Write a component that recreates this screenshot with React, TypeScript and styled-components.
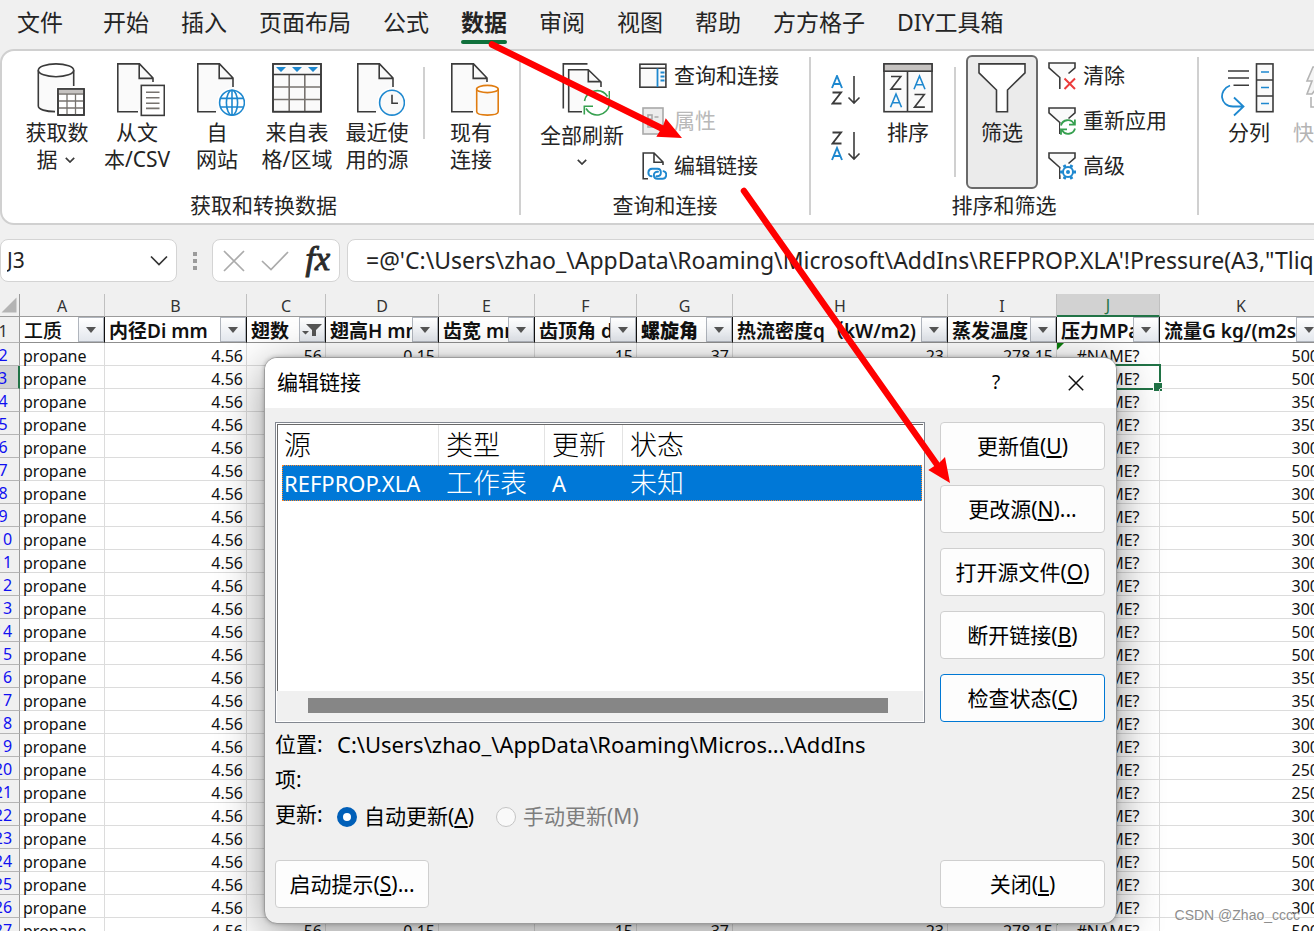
import React from "react";
import styled, { createGlobalStyle, css } from "styled-components";

const UI_FONT = `"Noto Sans", "Noto Sans CJK SC", sans-serif`;
const DARK = "#3b3b3b";
const BLUE = "#1e88cf";
const GREEN = "#217346";

const GlobalStyle = createGlobalStyle`
  * { box-sizing: border-box; }
  body { margin: 0; background: #f0f0f0; }
  button, input { font: inherit; color: inherit; margin: 0; }
  button { padding: 0; border: 0; background: none; cursor: pointer; }
`;

const Page = styled.div`
  position: relative;
  display: flex;
  flex-direction: column;
  height: 100vh;
  overflow: hidden;
  background: #f0f0f0;
  color: #242424;
  font-family: ${UI_FONT};
  font-size: 21px;
  line-height: 27px;
`;

/* ---------- ribbon tabs ---------- */

const TabBar = styled.nav`
  display: flex;
  flex-shrink: 0;
  gap: 32px;
  height: 49px;
  padding: 0 17px;
  font-size: 23px;
`;

const Tab = styled.button<{ $active?: boolean; $first?: boolean }>`
  display: flex;
  flex-direction: column;
  flex-shrink: 0;
  justify-content: space-between;
  height: 44px;
  padding-top: 6px;
  line-height: 32px;
  white-space: nowrap;
  margin-right: ${(p) => (p.$first ? "8px" : "0")};
  font-weight: ${(p) => (p.$active ? 700 : 400)};
  &::after {
    content: "";
    width: 100%;
    height: 4px;
    border-radius: 2px;
    background: ${(p) => (p.$active ? "#0f703b" : "transparent")};
  }
`;

/* ---------- ribbon ---------- */

const Ribbon = styled.section`
  display: flex;
  flex-shrink: 0;
  height: 176px;
  margin-right: -20px;
  padding: 6px 0 8px;
  border: 2px solid #d0d0d0;
  border-radius: 14px;
  background: #fff;
  overflow: hidden;
`;

const Group = styled.div<{ $width: number }>`
  display: flex;
  flex-direction: column;
  flex-shrink: 0;
  justify-content: space-between;
  width: ${(p) => p.$width}px;
  border-right: 2px solid #d0d0d0;
`;

const GroupItems = styled.div<{ $indent?: number }>`
  display: flex;
  align-items: flex-start;
  padding-left: ${(p) => p.$indent ?? 0}px;
`;

const GroupLabel = styled.div<{ $indent?: number }>`
  height: 23px;
  padding-left: ${(p) => p.$indent ?? 0}px;
  text-align: center;
`;

const BigButton = styled.button<{ $width?: number; $muted?: boolean }>`
  display: flex;
  flex-direction: column;
  flex-shrink: 0;
  align-items: center;
  width: ${(p) => p.$width ?? 80}px;
  padding-top: 6px;
  gap: 2px;
  white-space: nowrap;
  color: ${(p) => (p.$muted ? "#b4b4b4" : "inherit")};
`;

const FilterToggle = styled(BigButton)`
  height: 134px;
  margin: -2px 10px 0;
  border: 2px solid #6a6a6a;
  border-radius: 6px;
  background: #ebebeb;
`;

const StackedLabel = styled.span`
  display: flex;
  flex-direction: column;
  align-items: center;
  gap: 10px;
  padding-top: 3px;
`;

const Separator = styled.div<{ $height: number }>`
  flex-shrink: 0;
  width: 2px;
  height: ${(p) => p.$height}px;
  margin: 10px 0 0 6px;
  background: #d0d0d0;
`;

const SmallColumn = styled.div<{ $gap?: number }>`
  display: flex;
  flex-direction: column;
  gap: 17px;
  margin-left: ${(p) => p.$gap ?? 0}px;
  padding-top: 5px;
`;

const SmallButton = styled.button`
  display: flex;
  align-items: flex-start;
  gap: 7px;
  height: 28px;
  line-height: 26px;
  white-space: nowrap;
  &:disabled { color: #b9b9b9; }
`;

const SortColumn = styled.div`
  display: flex;
  flex-direction: column;
  gap: 26px;
  width: 37px;
  padding-top: 18px;
`;

const Drawing = styled.svg`
  display: block;
  flex-shrink: 0;
`;

const ChevronLine = styled.span`
  display: flex;
  align-items: center;
  gap: 7px;
  height: 27px;
  padding-left: 11px;
`;

const Big: React.FC<{ children: React.ReactNode; color?: string }> = ({ children, color = DARK }) => (
  <Drawing width="56" height="54" viewBox="0 0 56 54" fill="none" stroke={color} strokeWidth="1.6" aria-hidden>
    {children}
  </Drawing>
);

const Small: React.FC<{ children: React.ReactNode; color?: string }> = ({ children, color = DARK }) => (
  <Drawing width="28" height="28" viewBox="0 0 28 28" fill="none" stroke={color} strokeWidth="1.6" aria-hidden>
    {children}
  </Drawing>
);

const Chevron = () => (
  <Drawing width="10" height="6" viewBox="0 0 10 6" fill="none" stroke={DARK} strokeWidth="1.7" aria-hidden>
    <path d="M0.8 0.8 L5 5 L9.2 0.8" />
  </Drawing>
);

const Sheet = ({ tail = 24, foot = 27 }: { tail?: number; foot?: number }) => (
  <>
    <path d={`M${foot} 48.7 H8.8 V0.9 H30.5 L44 15 V${tail} L${foot} 48.7Z`} fill="#fafafa" stroke="none" />
    <path d={`M${foot} 48.7 H8.8 V0.9 H30.5 L44 15 V${tail} M30.2 0.9 V15.4 H44`} />
  </>
);

const DatabaseIcon = () => (
  <Big>
    <path d="M9.3 7.3 V43 C9.3 47 18 49 27 48.6 V24 H44.7 V7.3" fill="#fafafa" stroke="none" />
    <path d="M9.3 7.3 V43 C9.3 46.5 17 48.6 26 48.6 M44.7 7.3 V23" />
    <ellipse cx="27" cy="7.3" rx="17.7" ry="6.4" fill="#fff" />
    <rect x="29" y="26" width="26" height="26" fill="#fff" />
    <path d="M29.5 28.3 H54.5" stroke="#c6c3c1" strokeWidth="4" />
    <path d="M29 31 H55 M29 38 H55 M29 45 H55 M38 31 V52 M46.5 31 V52" stroke="#77736f" strokeWidth="1.3" />
    <rect x="29" y="26" width="26" height="26" />
  </Big>
);

const TextFileIcon = () => (
  <Big>
    <Sheet tail={19} foot={29} />
    <rect x="32.3" y="22.4" width="23" height="30" fill="#fff" />
    <path d="M37 29.3 H50.5 M37 34.8 H50.5 M37 40.2 H50.5 M37 45.4 H50.5" stroke="#77736f" />
  </Big>
);

const WebIcon = () => (
  <Big>
    <Sheet />
    <g stroke={BLUE}>
      <circle cx="43" cy="39.7" r="14.8" fill="#fff" stroke="none" />
      <circle cx="43" cy="39.7" r="12.4" />
      <ellipse cx="43" cy="39.7" rx="5.6" ry="12.4" />
      <path d="M43 27.3 V52 M31.5 35.4 H54.5 M31.5 44 H54.5" />
    </g>
  </Big>
);

const TableIcon = () => (
  <Big>
    <rect x="4" y="0.9" width="48" height="47.8" fill="#fafafa" />
    <path d="M5 24 H51 M5 36.5 H51 M20.2 11.5 V48 M35.8 11.5 V48" stroke="#77736f" />
    <path d="M4 11.5 H52" />
    <path d="M7 4 H17 L12 9Z M23 4 H33 L28 9Z M39 4 H49 L44 9Z" fill={BLUE} stroke="none" />
    <rect x="4" y="0.9" width="48" height="47.8" />
  </Big>
);

const RecentIcon = () => (
  <Big>
    <Sheet />
    <circle cx="43" cy="39.7" r="14.8" fill="#fff" stroke="none" />
    <circle cx="43" cy="39.7" r="12.4" stroke={BLUE} fill="#fafafa" />
    <path d="M43 31.7 V40.2 H49" />
  </Big>
);

const ConnectionIcon = () => (
  <Big>
    <Sheet tail={19} foot={30} />
    <g stroke="#e07c10">
      <path d="M33.7 26 V48.8 C33.7 53.2 55.2 53.2 55.2 48.8 V26" fill="#fafafa" />
      <ellipse cx="44.4" cy="26" rx="10.8" ry="3.6" fill="#fff" />
    </g>
  </Big>
);

const RefreshAllIcon = () => (
  <Big>
    <path d="M33.5 0.9 H9.3 V45.5" />
    <path d="M28 48.7 H14.7 V6.7 H34.3 L47 19 V24 L30 34Z" fill="#fafafa" stroke="none" />
    <path d="M28 48.7 H14.7 V6.7 H34.3 L47 19 V24 M34.3 6.7 V18.6 H47" />
    <g stroke="#36a04f">
      <path d="M30.5 38 A12.6 12.6 0 0 1 53.5 33.5 M55.5 41 A12.6 12.6 0 0 1 32 45.5" />
      <path d="M55.4 28 V35.8 H46.5 M30.3 51.5 V43.2 H39" />
    </g>
  </Big>
);

const QueriesIcon = () => (
  <Small>
    <rect x="0.9" y="2.2" width="26" height="23" fill="#fafafa" />
    <path d="M1 6.3 H27" />
    <path d="M18.5 6.5 V25 M21.5 10.5 H25.5 M21.5 14.5 H25.5 M21.5 18.5 H25.5" stroke={BLUE} strokeWidth="1.8" />
  </Small>
);

const PropertiesIcon = () => (
  <Small color="#a9a9a9">
    <rect x="4" y="1" width="20" height="26" fill="#ececec" />
    <rect x="9" y="8" width="4" height="4" />
    <rect x="9" y="16" width="4" height="4" />
    <path d="M15.5 10 H19.5 M16 18 H20" />
  </Small>
);

const EditLinksIcon = () => (
  <Small>
    <path d="M9 26.8 H4.2 V1 H15 L24 10 V13 M15 1 V10.2 H24" />
    <g stroke={BLUE} strokeWidth="1.9" strokeLinecap="round">
      <path d="M12.5 24.3 C8 23.5 8.5 17 13 16.8 H18.5 C23 17 23 24 18.5 24.2 H17.5" />
      <path d="M24.5 19.2 C29 20.5 27.5 26.8 23.5 26.8 H18.5 C14 26.8 13.5 20 18 19.8 H19" />
    </g>
  </Small>
);

const LetterA = ({ x, y, s = 1 }: { x: number; y: number; s?: number }) => (
  <path
    d={`M${x} ${y + 12 * s} L${x + 5 * s} ${y} L${x + 10 * s} ${y + 12 * s} M${x + 2 * s} ${y + 8 * s} H${x + 8 * s}`}
    stroke={BLUE}
  />
);

const LetterZ = ({ x, y, s = 1 }: { x: number; y: number; s?: number }) => (
  <path d={`M${x} ${y} H${x + 8.5 * s} L${x} ${y + 11 * s} H${x + 9 * s}`} />
);

const SortIcon = ({ descending = false }: { descending?: boolean }) => (
  <Drawing width="30" height="30" viewBox="0 0 30 30" fill="none" stroke={DARK} strokeWidth="1.9" aria-hidden>
    {descending ? <LetterZ x={1.5} y={1.5} /> : <LetterA x={1} y={1} />}
    {descending ? <LetterA x={1} y={17} /> : <LetterZ x={1.5} y={17.5} />}
    <path d="M23 1 V28 M17.5 22.5 L23 28 L28.5 22.5" strokeWidth="1.6" />
  </Drawing>
);

const SortDialogIcon = () => (
  <Big>
    <rect x="4" y="0.9" width="48" height="47.8" fill="#fafafa" />
    <rect x="4" y="0.9" width="48" height="7.3" fill="#c6c3c1" />
    <path d="M27.5 8 V48.5" />
    <LetterZ x={11} y={13.5} s={1.15} />
    <LetterA x={10.5} y={31} s={1.1} />
    <LetterA x={34} y={13} s={1.1} />
    <LetterZ x={34.5} y={31.5} s={1.15} />
  </Big>
);

const FilterIcon = () => (
  <Big>
    <path d="M5 0.9 H51 V9.8 L33.5 27 V48.7 H22.5 V27 L5 9.8Z" fill="#fff" />
  </Big>
);

const FunnelOutline = () => <path d="M11.8 27 V15.5 L1 5.8 V1 H27 V5.8 L20.5 11.5" fill="#fafafa" />;

const ClearIcon = () => (
  <Small>
    <FunnelOutline />
    <path d="M16.5 16.5 L27 27 M27 16.5 L16.5 27" stroke="#ec3b3b" strokeWidth="2" />
  </Small>
);

const ReapplyIcon = () => (
  <Small>
    <FunnelOutline />
    <circle cx="20" cy="20" r="8" fill="#fff" stroke="none" />
    <path
      d="M13 18.5 A7 7 0 0 1 26 17 M27 21.5 A7 7 0 0 1 14 23 M26.9 12.5 V17.7 H21 M13 27.8 V22.4 H19"
      stroke="#36a04f"
      strokeWidth="1.8"
    />
  </Small>
);

const AdvancedIcon = () => (
  <Small>
    <FunnelOutline />
    <circle cx="20" cy="20" r="8" fill="#fff" stroke="none" />
    <circle cx="20" cy="20" r="5" stroke={BLUE} strokeWidth="2" />
    <circle cx="20" cy="20" r="2" fill={BLUE} stroke="none" />
    <g stroke={BLUE} strokeWidth="3">
      <path d="M17.3 15.3 L16 13 M22.7 15.3 L24 13 M25.3 20 H28 M22.7 24.7 L24 27 M17.3 24.7 L16 27 M14.7 20 H12" />
    </g>
  </Small>
);

const SplitColumnsIcon = () => (
  <Big>
    <path d="M7 8 H28 M7 15 H28 M12.5 22.3 H28" />
    <rect x="35.5" y="0.9" width="16.5" height="47.8" fill="#fafafa" />
    <path d="M35.5 17 H52 M35.5 33 H52" />
    <path d="M40 9 H48 M40 24.5 H48 M40 40.5 H48" stroke={BLUE} />
    <path d="M9 22.5 C-3 27 -1 43.5 12 43.5 H22.5 M13 34.5 L22.5 43.5 L13 52.5" stroke={BLUE} strokeWidth="1.8" />
  </Big>
);

const FlashFillIcon = () => (
  <Big color="#b4b4b4">
    <path d="M34 4 H27 L21 18 H26 L21 31 H26 L36 18 H31Z" fill="#f5f5f5" />
    <path d="M25 34 V44 H45 V4 H38" />
  </Big>
);

/* ---------- formula bar ---------- */

const FormulaBar = styled.section`
  display: flex;
  flex-shrink: 0;
  height: 69px;
  padding: 14px 0 12px;
`;

const barBox = css`
  display: flex;
  align-items: center;
  height: 43px;
  border: 1px solid #d4d4d4;
  border-radius: 8px;
  background: #fff;
`;

const NameBox = styled.div`
  ${barBox}
  flex-shrink: 0;
  width: 177px;
  padding: 0 8px 0 6px;
  input {
    flex: 1;
    min-width: 0;
    padding: 0;
    border: 0;
    outline: 0;
    background: none;
  }
`;

const Grip = styled.div`
  display: flex;
  flex-direction: column;
  flex-shrink: 0;
  justify-content: center;
  align-items: center;
  gap: 3px;
  width: 35px;
  height: 43px;
  i {
    width: 4px;
    height: 4px;
    background: #9b9b9b;
  }
`;

const FormulaActions = styled.div`
  ${barBox}
  flex-shrink: 0;
  justify-content: space-between;
  width: 128px;
  padding: 0 8px 0 10px;
`;

const FxButton = styled.button`
  padding: 0 1px 4px 0;
  font: italic 400 34px/36px "Liberation Serif", serif;
  color: #2b2b2b;
  -webkit-text-stroke: 1px #2b2b2b;
`;

const FormulaInput = styled.input`
  ${barBox}
  flex: 1;
  min-width: 0;
  margin: 0 -20px 0 7px;
  padding: 0 0 2px 18px;
  outline: 0;
  font-size: 23px;
  white-space: nowrap;
`;

/* ---------- worksheet ---------- */

const SheetArea = styled.main`
  flex: 1;
  min-height: 0;
  overflow: hidden;
`;

const Grid = styled.table`
  width: 1336px;
  margin-left: -13px;
  table-layout: fixed;
  border-spacing: 0;
  background: #fff;
  color: #111;
  font-size: 16px;
  line-height: 20px;
  th, td {
    padding: 0;
    font-weight: 400;
    white-space: nowrap;
  }
`;

const ColumnHead = styled.th<{ $active?: boolean }>`
  height: 23px;
  border-right: 1px solid #c0c0c0;
  border-bottom: ${(p) => (p.$active ? `2px solid ${GREEN}` : "1px solid #9b9b9b")};
  background: ${(p) => (p.$active ? "#d2d2d2" : "#f0f0f0")};
  color: ${(p) => (p.$active ? GREEN : "#333")};
  vertical-align: bottom;
`;

const Corner = styled.th`
  border-right: 1px solid #9b9b9b;
  border-bottom: 1px solid #9b9b9b;
  background: #f0f0f0;
  svg { margin: 0 2px 0 auto; }
`;

const RowHead = styled.th<{ $active?: boolean; $plain?: boolean }>`
  border-right: ${(p) => (p.$active ? `2px solid ${GREEN}` : "1px solid #9b9b9b")};
  border-bottom: 1px solid #b5b5b5;
  background: ${(p) => (p.$active ? "#d2d2d2" : "#f0f0f0")};
  color: ${(p) => (p.$plain ? "#333" : "#1010f0")};
  && { padding-top: 2px; }
  line-height: 20px;
`;

const FieldHead = styled.td<{ $weight: number }>`
  height: 26px;
  border-right: 1px solid #111;
  border-bottom: 1px solid #8f8f8f;
  > div {
    display: flex;
    justify-content: space-between;
    height: 25px;
    padding-left: 4px;
  }
  span {
    min-width: 0;
    overflow: hidden;
    font-size: 19px;
    font-weight: ${(p) => p.$weight};
    line-height: 29px;
  }
`;

const FilterButton = styled.button`
  display: flex;
  flex-shrink: 0;
  align-items: center;
  justify-content: center;
  width: 26px;
  height: 25px;
  border: 1px solid #b0b5bd;
  background: linear-gradient(#fff, #e3e7ed);
`;

const Cell = styled.td<{ $align?: string }>`
  position: relative;
  height: 23px;
  border-right: 1px solid #dcdcdc;
  border-bottom: 1px solid #dcdcdc;
  && { padding: 4px 3px 0; }
  line-height: 18px;
  text-align: ${(p) => p.$align ?? "right"};
`;

const Selection = styled.div`
  position: absolute;
  inset: -2px;
  border: 2px solid ${GREEN};
  &::after {
    content: "";
    position: absolute;
    right: -3px;
    bottom: -3px;
    width: 8px;
    height: 8px;
    border: 1px solid #fff;
    border-width: 1px 0 0 1px;
    background: ${GREEN};
  }
`;

const ErrorMark = styled.i`
  position: absolute;
  top: 0;
  left: 0;
  border-top: 7px solid #0a7d0a;
  border-right: 7px solid transparent;
`;

/* ---------- dialog ---------- */

const Dialog = styled.section`
  position: absolute;
  top: 357px;
  left: 264px;
  width: 853px;
  border: 1px solid #9d9d9d;
  border-radius: 13px;
  background: #f0f0f0;
  box-shadow: 0 10px 46px rgba(0, 0, 0, 0.42), 0 0 4px rgba(0, 0, 0, 0.25);
  color: #000;
  overflow: hidden;
`;

const DialogTitle = styled.header`
  display: flex;
  align-items: center;
  height: 50px;
  padding: 0 32px 1px 12px;
  background: #fff;
  h2 {
    flex: 1;
    margin: 0;
    font-size: 21px;
    font-weight: 400;
  }
`;

const TitleButton = styled.button`
  display: flex;
  justify-content: center;
  width: 16px;
  margin-left: 64px;
  font-size: 19px;
`;

const DialogBody = styled.div`
  display: grid;
  grid-template-columns: 650px 165px;
  gap: 0 15px;
  padding: 14px 10px 15px;
`;

const ButtonStack = styled.div`
  display: flex;
  flex-direction: column;
  gap: 15px;
`;

const DialogButton = styled.button<{ $focus?: boolean; $width?: number }>`
  width: ${(p) => p.$width ?? 165}px;
  height: 48px;
  border: 1px solid ${(p) => (p.$focus ? "#0078d4" : "#cfcfcf")};
  border-radius: 4px;
  background: #fdfdfd;
  white-space: nowrap;
`;

const ListBox = styled.div`
  display: flex;
  flex-direction: column;
  height: 301px;
  border: 1px solid #828790;
  padding: 1px;
  background: #fff;
`;

const ListView = styled.div`
  flex: 1;
  padding: 0 1px 0 4px;
  border: 1px solid #696969;
  border-width: 1px 0 0 1px;
`;

const LinkTable = styled.table`
  width: 100%;
  table-layout: fixed;
  border-spacing: 0;
  font-size: 27px;
  text-align: left;
  th, td {
    padding: 0 0 1px 7px;
    font-weight: 300;
    white-space: nowrap;
  }
  th { height: 40px; border-right: 1px solid #e3e3e3; }
  th:last-child { border-right: 0; }
  td { height: 36px; background: #0078d7; color: #fff; }
  th:first-child, td:first-child { padding-left: 2px; }
  tbody { outline: 1px dotted #ff8728; outline-offset: -1px; }
`;

const Latin = styled.span`
  font-size: 22px;
  font-weight: 400;
`;

const ScrollTrack = styled.div`
  height: 30px;
  padding: 7px 35px 8px 31px;
  background: #f0f0f0;
  div { height: 15px; background: #868686; }
`;

const Details = styled.dl`
  display: grid;
  grid-template-columns: 62px 1fr;
  grid-auto-rows: 35px;
  align-items: center;
  margin: 4px 0 0;
  dd { margin: 0; white-space: nowrap; }
`;

const LocationPath = styled.dd`
  font-size: 22px;
`;

const RadioRow = styled.dd`
  display: flex;
  gap: 22px;
  padding-top: 4px;
`;

const RadioLabel = styled.label<{ $muted?: boolean }>`
  display: flex;
  align-items: center;
  gap: 7px;
  color: ${(p) => (p.$muted ? "#7d7d7d" : "inherit")};
  input {
    appearance: none;
    width: 20px;
    height: 20px;
    border: 1px solid #c4c4c4;
    border-radius: 50%;
    background: #f9f9f9;
  }
  input:checked { border: 6px solid #005fb8; background: #fff; }
`;

const FooterCell = styled.div`
  padding-top: 28px;
`;

/* ---------- annotations ---------- */

const Arrows = styled.svg`
  position: absolute;
  top: 0;
  left: 0;
  pointer-events: none;
`;

const Watermark = styled.div`
  position: absolute;
  right: 14px;
  bottom: 6px;
  color: #8e8e8e;
  font-family: "Liberation Sans", sans-serif;
  font-size: 14px;
  line-height: 20px;
  text-shadow: 1px 1px 0 #fff;
`;

/* ---------- data ---------- */

const TABS = ["文件", "开始", "插入", "页面布局", "公式", "数据", "审阅", "视图", "帮助", "方方格子", "DIY工具箱"];

const COLUMNS = [
  { id: "A", width: 85, title: "工质", weight: 500 },
  { id: "B", width: 142, title: "内径Di mm", weight: 600 },
  { id: "C", width: 79, title: "翅数", weight: 600, filtered: true },
  { id: "D", width: 113, title: "翅高H mm", weight: 600 },
  { id: "E", width: 96, title: "齿宽 mm", weight: 600 },
  { id: "F", width: 102, title: "齿顶角 deg", weight: 600 },
  { id: "G", width: 96, title: "螺旋角", weight: 800 },
  { id: "H", width: 215, title: "热流密度q（kW/m2)", weight: 600 },
  { id: "I", width: 109, title: "蒸发温度", weight: 600 },
  { id: "J", width: 103, title: "压力MPa", weight: 600 },
  { id: "K", width: 163, title: "流量G kg/(m2s)", weight: 600 },
];

const FLOWS = [
  500, 500, 350, 350, 300, 500, 300, 500, 300, 300, 300, 300, 500, 500, 350, 350, 300, 300, 250, 250, 300, 300, 500,
  300, 300, 500,
];

const FORMULA = `=@'C:\\Users\\zhao_\\AppData\\Roaming\\Microsoft\\AddIns\\REFPROP.XLA'!Pressure(A3,"Tliq","SI",I3)`;

export default function App() {
  return (
    <Page>
      <GlobalStyle />
      <TabBar>
        {TABS.map((name, i) => (
          <Tab key={name} $first={i === 0} $active={name === "数据"}>
            {name}
          </Tab>
        ))}
      </TabBar>

      <Ribbon>
        <Group $width={519}>
          <GroupItems $indent={15}>
            <BigButton>
              <DatabaseIcon />
              <span>
                获取数
                <ChevronLine>
                  据
                  <Chevron />
                </ChevronLine>
              </span>
            </BigButton>
            <BigButton><TextFileIcon /><span>从文<br />本/CSV</span></BigButton>
            <BigButton><WebIcon /><span>自<br />网站</span></BigButton>
            <BigButton><TableIcon /><span>来自表<br />格/区域</span></BigButton>
            <BigButton><RecentIcon /><span>最近使<br />用的源</span></BigButton>
            <Separator $height={72} />
            <BigButton $width={92}><ConnectionIcon /><span>现有<br />连接</span></BigButton>
          </GroupItems>
          <GroupLabel $indent={6}>获取和转换数据</GroupLabel>
        </Group>

        <Group $width={290}>
          <GroupItems $indent={16}>
            <BigButton $width={90}>
              <RefreshAllIcon />
              <StackedLabel>
                全部刷新
                <Chevron />
              </StackedLabel>
            </BigButton>
            <SmallColumn $gap={12}>
              <SmallButton><QueriesIcon />查询和连接</SmallButton>
              <SmallButton disabled><PropertiesIcon />属性</SmallButton>
              <SmallButton><EditLinksIcon />编辑链接</SmallButton>
            </SmallColumn>
          </GroupItems>
          <GroupLabel>查询和连接</GroupLabel>
        </Group>

        <Group $width={388}>
          <GroupItems $indent={20}>
            <SortColumn>
              <button aria-label="升序"><SortIcon /></button>
              <button aria-label="降序"><SortIcon descending /></button>
            </SortColumn>
            <BigButton><SortDialogIcon /><span>排序</span></BigButton>
            <Separator $height={110} />
            <FilterToggle $width={72} aria-pressed><FilterIcon /><span>筛选</span></FilterToggle>
            <SmallColumn>
              <SmallButton><ClearIcon />清除</SmallButton>
              <SmallButton><ReapplyIcon />重新应用</SmallButton>
              <SmallButton><AdvancedIcon />高级</SmallButton>
            </SmallColumn>
          </GroupItems>
          <GroupLabel>排序和筛选</GroupLabel>
        </Group>

        <GroupItems $indent={10}>
          <BigButton><SplitColumnsIcon /><span>分列</span></BigButton>
          <BigButton $width={50} $muted><FlashFillIcon /><span>快速</span></BigButton>
        </GroupItems>
      </Ribbon>

      <FormulaBar>
        <NameBox>
          <input aria-label="名称框" defaultValue="J3" />
          <button aria-label="展开名称框">
            <Drawing width="18" height="12" viewBox="0 0 18 12" fill="none" stroke="#333" strokeWidth="1.7">
              <path d="M1 1.5 L9 9.5 L17 1.5" />
            </Drawing>
          </button>
        </NameBox>
        <Grip><i /><i /><i /></Grip>
        <FormulaActions>
          <button aria-label="取消">
            <Drawing width="22" height="22" viewBox="0 0 22 22" fill="none" stroke="#ababab" strokeWidth="1.7">
              <path d="M1 1 L21 21 M21 1 L1 21" />
            </Drawing>
          </button>
          <button aria-label="输入">
            <Drawing width="28" height="20" viewBox="0 0 28 20" fill="none" stroke="#ababab" strokeWidth="1.7">
              <path d="M1 10 L10 18.5 L27 1" />
            </Drawing>
          </button>
          <FxButton aria-label="插入函数">fx</FxButton>
        </FormulaActions>
        <FormulaInput aria-label="编辑栏" defaultValue={FORMULA} />
      </FormulaBar>

      <SheetArea>
        <Grid>
          <colgroup>
            <col width={33} />
            {COLUMNS.map((c) => <col key={c.id} width={c.width} />)}
          </colgroup>
          <thead>
            <tr>
              <Corner>
                <Drawing width="16" height="16" viewBox="0 0 16 16" aria-hidden>
                  <path d="M15.5 0.5 V15.5 H0.5Z" fill="#b4b4b4" />
                </Drawing>
              </Corner>
              {COLUMNS.map((c) => <ColumnHead key={c.id} $active={c.id === "J"}>{c.id}</ColumnHead>)}
            </tr>
          </thead>
          <tbody>
            <tr>
              <RowHead $plain>1</RowHead>
              {COLUMNS.map((c) => (
                <FieldHead key={c.id} $weight={c.weight}>
                  <div>
                    <span>{c.title}</span>
                    <FilterButton aria-label={`筛选 ${c.title}`}>
                      {c.filtered ? (
                        <Drawing width="20" height="14" viewBox="0 0 20 14" fill="#555">
                          <path d="M4 1 H20 L14 7 V13 H10 V7Z M0 8 H7 L3.5 11.5Z" />
                        </Drawing>
                      ) : (
                        <Drawing width="10" height="6" viewBox="0 0 10 6" fill="#555">
                          <path d="M0 0 H10 L5 6Z" />
                        </Drawing>
                      )}
                    </FilterButton>
                  </div>
                </FieldHead>
              ))}
            </tr>
            {FLOWS.map((flow, i) => (
              <tr key={i}>
                <RowHead $active={i === 1}>{i + 2}</RowHead>
                <Cell $align="left">propane</Cell>
                <Cell>4.56</Cell>
                <Cell>56</Cell>
                <Cell>0.15</Cell>
                <Cell />
                <Cell>15</Cell>
                <Cell>37</Cell>
                <Cell>23</Cell>
                <Cell>278.15</Cell>
                <Cell $align="center">
                  #NAME?
                  {i === 1 ? <Selection /> : <ErrorMark />}
                </Cell>
                <Cell>{flow}</Cell>
              </tr>
            ))}
          </tbody>
        </Grid>
      </SheetArea>

      <Dialog role="dialog" aria-labelledby="links-title">
        <DialogTitle>
          <h2 id="links-title">编辑链接</h2>
          <TitleButton aria-label="帮助">?</TitleButton>
          <TitleButton aria-label="关闭">
            <Drawing width="16" height="16" viewBox="0 0 16 16" fill="none" stroke="#111" strokeWidth="1.5">
              <path d="M0.8 0.8 L15.2 15.2 M15.2 0.8 L0.8 15.2" />
            </Drawing>
          </TitleButton>
        </DialogTitle>
        <DialogBody>
          <ListBox>
            <ListView>
              <LinkTable>
                <colgroup>
                  <col width={157} />
                  <col width={106} />
                  <col width={78} />
                  <col />
                </colgroup>
                <thead>
                  <tr><th>源</th><th>类型</th><th>更新</th><th>状态</th></tr>
                </thead>
                <tbody>
                  <tr>
                    <td><Latin>REFPROP.XLA</Latin></td>
                    <td>工作表</td>
                    <td><Latin>A</Latin></td>
                    <td>未知</td>
                  </tr>
                </tbody>
              </LinkTable>
            </ListView>
            <ScrollTrack><div /></ScrollTrack>
          </ListBox>
          <ButtonStack>
            <DialogButton>更新值(<u>U</u>)</DialogButton>
            <DialogButton>更改源(<u>N</u>)...</DialogButton>
            <DialogButton>打开源文件(<u>O</u>)</DialogButton>
            <DialogButton>断开链接(<u>B</u>)</DialogButton>
            <DialogButton $focus>检查状态(<u>C</u>)</DialogButton>
          </ButtonStack>
          <Details>
            <dt>位置:</dt>
            <LocationPath>C:\Users\zhao_\AppData\Roaming\Micros...\AddIns</LocationPath>
            <dt>项:</dt>
            <dd />
            <dt>更新:</dt>
            <RadioRow>
              <RadioLabel>
                <input type="radio" name="update" defaultChecked />
                <span>自动更新(<u>A</u>)</span>
              </RadioLabel>
              <RadioLabel $muted>
                <input type="radio" name="update" disabled />
                <span>手动更新(M)</span>
              </RadioLabel>
            </RadioRow>
          </Details>
          <div />
          <FooterCell><DialogButton $width={154}>启动提示(<u>S</u>)...</DialogButton></FooterCell>
          <FooterCell><DialogButton>关闭(<u>L</u>)</DialogButton></FooterCell>
        </DialogBody>
      </Dialog>

      <Arrows width="1000" height="500" viewBox="0 0 1000 500" fill="#f00" aria-hidden>
        <path d="M492 44.5 L664 129.5" stroke="#f00" strokeWidth="6.5" strokeLinecap="round" />
        <path d="M682 138 L665.7 118.3 L663 126 L656.3 136.7Z" />
        <path d="M744 191 L938 466" stroke="#f00" strokeWidth="6.5" strokeLinecap="round" />
        <path d="M950 483 L945 457 L939 463 L928.3 470Z" />
      </Arrows>
      <Watermark>CSDN @Zhao_cccc</Watermark>
    </Page>
  );
}
